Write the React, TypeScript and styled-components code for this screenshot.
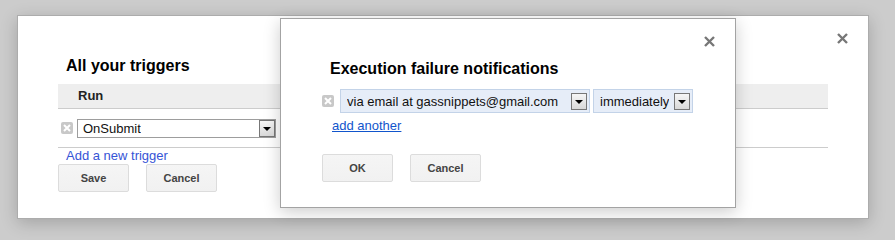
import { createGlobalStyle } from "styled-components";
import styled from "styled-components";

const GlobalStyle = createGlobalStyle`
  html, body {
    margin: 0;
    padding: 0;
    background: #cccccc;
    font-family: "Liberation Sans", Arial, sans-serif;
  }
`;

const Page = styled.div`
  position: relative;
  width: 895px;
  height: 240px;
  padding: 15px 0 0 17px;
  box-sizing: border-box;
  overflow: hidden;
`;

const Dialog = styled.div<{ $w: number; $h: number }>`
  position: relative;
  box-sizing: border-box;
  width: ${(p) => p.$w}px;
  height: ${(p) => p.$h}px;
  background: #fff;
  border: 1px solid #acacac;
  box-shadow: 0 4px 16px rgba(0, 0, 0, 0.2);
  padding: 40px 40px 0 40px;
`;

const FrontDialog = styled(Dialog)`
  position: absolute;
  left: 280px;
  top: 18px;
  border-color: #a3a3a3;
  padding-left: 41px;
`;

const CloseButton = styled.svg`
  position: absolute;
  top: 17px;
  right: 20px;
  width: 11px;
  height: 11px;
`;

const Title = styled.div`
  font-size: 16px;
  font-weight: bold;
  line-height: 20px;
  color: #000;
  padding-left: 8px;
`;

const TableHead = styled.div`
  margin-top: 8px;
  height: 24px;
  line-height: 24px;
  background: #eeeeee;
  border-bottom: 1px solid #cccccc;
  padding-left: 20px;
  font-size: 13px;
  font-weight: bold;
  color: #222;
`;

const TriggerRow = styled.div`
  height: 38px;
  border-bottom: 1px solid #cccccc;
  display: flex;
  align-items: center;
  gap: 4px;
  padding-left: 3px;
`;

const RemoveIcon = styled.span`
  width: 12px;
  height: 12px;
  border-radius: 2px;
  background: #c8c8c8;
  display: flex;
  align-items: center;
  justify-content: center;
  flex-shrink: 0;
`;

const NotifyRow = styled.div`
  margin-top: 10px;
  height: 24px;
  display: flex;
  align-items: center;
  gap: 3px;

  ${RemoveIcon} {
    margin-right: 3px;
  }
`;

const SelectBox = styled.div<{ $w: number; $h: number; $tinted?: boolean }>`
  box-sizing: border-box;
  width: ${(p) => p.$w}px;
  height: ${(p) => p.$h}px;
  display: flex;
  align-items: center;
  justify-content: space-between;
  border: 1px solid ${(p) => (p.$tinted ? "#c3d3e8" : "#9d9d9d")};
  background: ${(p) => (p.$tinted ? "#e6edf8" : "#fff")};
  padding: 0 ${(p) => (p.$tinted ? 2 : 0)}px 0 ${(p) => (p.$tinted ? 6 : 5)}px;
  font-size: 13px;
  color: #111;
  white-space: nowrap;
`;

const SelectText = styled.span`
  line-height: 15px;
  overflow: hidden;
`;

const ArrowButton = styled.span`
  box-sizing: border-box;
  width: 16px;
  height: 17px;
  flex-shrink: 0;
  border: 1px solid #777;
  background: linear-gradient(#f6f6f6, #d9d9d9);
  display: flex;
  align-items: center;
  justify-content: center;
  &::after {
    content: "";
    border-left: 4px solid transparent;
    border-right: 4px solid transparent;
    border-top: 4px solid #000;
    margin-top: 1px;
  }
`;

const Link = styled.a<{ $underline?: boolean; $indent: number; $top?: number }>`
  display: block;
  margin-top: ${(p) => p.$top ?? 0}px;
  font-size: 13px;
  line-height: 15px;
  padding-left: ${(p) => p.$indent}px;
  color: ${(p) => (p.$underline ? "#1155cc" : "#3654d6")};
  text-decoration: ${(p) => (p.$underline ? "underline" : "none")};
  cursor: pointer;
`;

const ButtonRow = styled.div<{ $top: number }>`
  margin-top: ${(p) => p.$top}px;
  display: flex;
  gap: 17px;
`;

const Button = styled.button`
  box-sizing: border-box;
  width: 71px;
  height: 28px;
  border: 1px solid #dcdcdc;
  border-radius: 2px;
  background: linear-gradient(#f5f5f5, #f1f1f1);
  font-family: "Liberation Sans", Arial, sans-serif;
  font-size: 11px;
  font-weight: bold;
  color: #444;
  padding: 0;
`;

const CloseX = () => (
  <CloseButton viewBox="0 0 11 11">
    <path d="M1 1 L10 10 M10 1 L1 10" stroke="#777" strokeWidth="2.4" />
  </CloseButton>
);

const SmallX = () => (
  <svg width="8" height="8" viewBox="0 0 8 8">
    <path d="M1 1 L7 7 M7 1 L1 7" stroke="#fff" strokeWidth="2" />
  </svg>
);

export default function App() {
  return (
    <Page>
      <GlobalStyle />
      <Dialog $w={852} $h={204}>
        <CloseX />
        <Title>All your triggers</Title>
        <TableHead>Run</TableHead>
        <TriggerRow>
          <RemoveIcon>
            <SmallX />
          </RemoveIcon>
          <SelectBox $w={199} $h={19}>
            <SelectText>OnSubmit</SelectText>
            <ArrowButton />
          </SelectBox>
        </TriggerRow>
        <Link $indent={8}>Add a new trigger</Link>
        <ButtonRow $top={1}>
          <Button>Save</Button>
          <Button>Cancel</Button>
        </ButtonRow>
      </Dialog>

      <FrontDialog $w={456} $h={190}>
        <CloseX />
        <Title>Execution failure notifications</Title>
        <NotifyRow>
          <RemoveIcon>
            <SmallX />
          </RemoveIcon>
          <SelectBox $w={250} $h={24} $tinted>
            <SelectText>via email at gassnippets@gmail.com</SelectText>
            <ArrowButton />
          </SelectBox>
          <SelectBox $w={100} $h={24} $tinted>
            <SelectText>immediately</SelectText>
            <ArrowButton />
          </SelectBox>
        </NotifyRow>
        <Link $underline $indent={10} $top={5}>
          add another
        </Link>
        <ButtonRow $top={21}>
          <Button>OK</Button>
          <Button>Cancel</Button>
        </ButtonRow>
      </FrontDialog>
    </Page>
  );
}
